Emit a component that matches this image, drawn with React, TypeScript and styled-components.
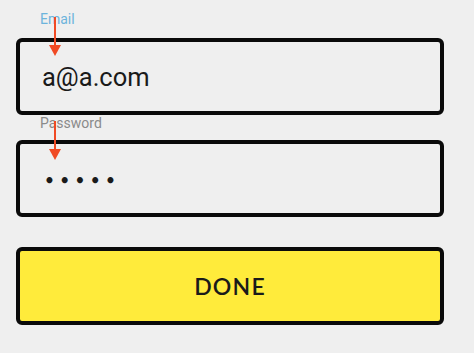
import React from "react";
import styled, { createGlobalStyle } from "styled-components";

const Global = createGlobalStyle`
  html, body { margin: 0; padding: 0; background: #efefef; }
  body { width: 474px; height: 353px; overflow: hidden; font-family: Roboto, "Liberation Sans", sans-serif; }
`;

const Page = styled.div`
  width: 474px;
  height: 353px;
  box-sizing: border-box;
  padding: 11px 30px 0 16px;
  display: flex;
  flex-direction: column;
`;

const Field = styled.div<{ $gap: number }>`
  position: relative;
  display: flex;
  flex-direction: column;
  gap: ${(p) => p.$gap}px;
`;

const Label = styled.div<{ $color: string }>`
  margin-left: 24px;
  font-size: 14px;
  line-height: 17px;
  color: ${(p) => p.$color};
`;

const Box = styled.div`
  height: 77px;
  box-sizing: border-box;
  border: 4px solid #0a0a0a;
  border-radius: 6px;
  display: flex;
  align-items: center;
  padding-left: 22px;
  font-size: 25.5px;
  color: #1a1a1a;
`;

const Dots = styled.span`
  font-size: 17px;
  letter-spacing: 4.4px;
  padding-left: 2px;
  padding-top: 4px;
  font-family: "DejaVu Sans", sans-serif;
  font-weight: bold;
  color: #1a1a1a;
`;

const Arrow = styled.svg`
  position: absolute;
  left: 33px;
  top: 6px;
`;

const Button = styled.button`
  margin-top: 30px;
  height: 78px;
  box-sizing: border-box;
  border: 4px solid #0a0a0a;
  border-radius: 6px;
  background: #ffeb3b;
  font-family: Lato, "Open Sans", sans-serif;
  font-weight: 600;
  font-size: 23px;
  letter-spacing: 1.2px;
  color: #1a1a1a;
  padding: 0;
  cursor: pointer;
`;

const RedArrow = () => (
  <Arrow width="12" height="40" viewBox="0 0 12 40">
    <rect x="5" y="0" width="2" height="30" fill="#f04a24" />
    <polygon points="0,28 12,28 6,39" fill="#f04a24" />
  </Arrow>
);

export default function App() {
  return (
    <>
      <Global />
      <Page>
        <Field $gap={10}>
          <Label $color="#6cb4dc">Email</Label>
          <Box>a@a.com</Box>
          <RedArrow />
        </Field>
        <Field $gap={8}>
          <Label $color="#8a8a8a">Password</Label>
          <Box>
            <Dots>•••••</Dots>
          </Box>
          <RedArrow />
        </Field>
        <Button>DONE</Button>
      </Page>
    </>
  );
}
